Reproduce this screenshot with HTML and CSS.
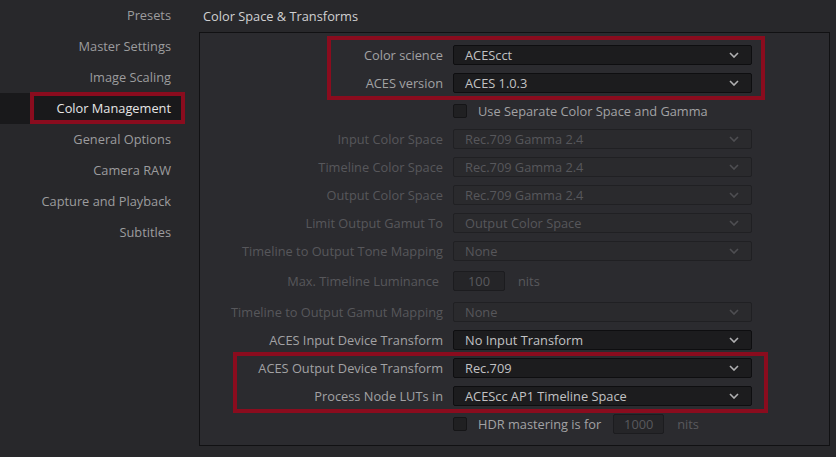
FILE: index.html
```html
<!DOCTYPE html>
<html>
<head>
<meta charset="utf-8">
<link rel="stylesheet" href="styles.css">
</head>
<body>
<div class="app">
  <nav class="sidebar">
    <div class="nav-item">Presets</div>
    <div class="nav-item">Master Settings</div>
    <div class="nav-item">Image Scaling</div>
    <div class="nav-item selected">Color Management</div>
    <div class="nav-item">General Options</div>
    <div class="nav-item">Camera RAW</div>
    <div class="nav-item">Capture and Playback</div>
    <div class="nav-item">Subtitles</div>
  </nav>
  <main class="main">
    <div class="title">Color Space &amp; Transforms</div>
    <section class="panel">
      <div class="form">
        <div class="label">Color science</div>
        <div class="select"><span>ACEScct</span><svg class="chev" viewBox="0 0 10 6"><path d="M1 1 L5 5 L9 1"/></svg></div>

        <div class="label">ACES version</div>
        <div class="select"><span>ACES 1.0.3</span><svg class="chev" viewBox="0 0 10 6"><path d="M1 1 L5 5 L9 1"/></svg></div>

        <div class="label"></div>
        <div class="check-row"><div class="checkbox"></div><span class="check-label">Use Separate Color Space and Gamma</span></div>

        <div class="label dis">Input Color Space</div>
        <div class="select dis"><span>Rec.709 Gamma 2.4</span><svg class="chev" viewBox="0 0 10 6"><path d="M1 1 L5 5 L9 1"/></svg></div>

        <div class="label dis">Timeline Color Space</div>
        <div class="select dis"><span>Rec.709 Gamma 2.4</span><svg class="chev" viewBox="0 0 10 6"><path d="M1 1 L5 5 L9 1"/></svg></div>

        <div class="label dis">Output Color Space</div>
        <div class="select dis"><span>Rec.709 Gamma 2.4</span><svg class="chev" viewBox="0 0 10 6"><path d="M1 1 L5 5 L9 1"/></svg></div>

        <div class="label dis">Limit Output Gamut To</div>
        <div class="select dis"><span>Output Color Space</span><svg class="chev" viewBox="0 0 10 6"><path d="M1 1 L5 5 L9 1"/></svg></div>

        <div class="label dis">Timeline to Output Tone Mapping</div>
        <div class="select dis"><span>None</span><svg class="chev" viewBox="0 0 10 6"><path d="M1 1 L5 5 L9 1"/></svg></div>

        <div class="label dis lum-label">Max. Timeline Luminance</div>
        <div class="num-row lum"><div class="num dis">100</div><span class="unit">nits</span></div>

        <div class="label dis">Timeline to Output Gamut Mapping</div>
        <div class="select dis"><span>None</span><svg class="chev" viewBox="0 0 10 6"><path d="M1 1 L5 5 L9 1"/></svg></div>

        <div class="label">ACES Input Device Transform</div>
        <div class="select"><span>No Input Transform</span><svg class="chev" viewBox="0 0 10 6"><path d="M1 1 L5 5 L9 1"/></svg></div>

        <div class="label">ACES Output Device Transform</div>
        <div class="select"><span>Rec.709</span><svg class="chev" viewBox="0 0 10 6"><path d="M1 1 L5 5 L9 1"/></svg></div>

        <div class="label">Process Node LUTs in</div>
        <div class="select"><span>ACEScc AP1 Timeline Space</span><svg class="chev" viewBox="0 0 10 6"><path d="M1 1 L5 5 L9 1"/></svg></div>

        <div class="label"></div>
        <div class="check-row"><div class="checkbox"></div><span class="check-label">HDR mastering is for</span><div class="num dis wide">1000</div><span class="unit">nits</span></div>
      </div>
      <div class="mark mark-top"></div>
      <div class="mark mark-bottom"></div>
    </section>
  </main>
</div>
</body>
</html>
```

FILE: styles.css
```css
* { box-sizing: border-box; }
html, body {
  margin: 0;
  padding: 0;
  background: #28282b;
  font-family: "Open Sans", "DejaVu Sans", sans-serif;
  font-size: 12.8px;
  color: #a6a6a8;
}
.app {
  display: flex;
  width: 836px;
  height: 457px;
  overflow: hidden;
}
.sidebar {
  width: 185px;
  flex: none;
}
.nav-item {
  position: relative;
  height: 31px;
  line-height: 30px;
  text-align: right;
  padding-right: 14px;
  color: #9c9c9e;
  white-space: nowrap;
}
.nav-item.selected {
  background: #19191b;
  color: #e6e6e6;
}
.nav-item.selected::after {
  content: "";
  position: absolute;
  left: 30px;
  right: 0;
  top: -1px;
  bottom: 0;
  border: 4px solid #8a0c1e;
}
.main {
  margin-left: 14px;
  flex: none;
  width: 631px;
}
.title {
  height: 32px;
  line-height: 32px;
  padding-left: 4px;
  color: #d0d0d2;
}
.panel {
  position: relative;
  width: 631px;
  height: 414px;
  background: #2b2b2f;
  border: 1px solid #111113;
  padding-top: 12px;
}
.form {
  display: grid;
  grid-template-columns: 243px 299px;
  column-gap: 10px;
  row-gap: 8px;
  grid-auto-rows: auto;
  align-items: start;
}
.label {
  height: 20px;
  text-align: right;
  line-height: 20px;
  white-space: nowrap;
  color: #a2a2a4;
}
.label.dis { color: #57575b; }
.select {
  display: flex;
  align-items: center;
  justify-content: space-between;
  height: 20px;
  background: #1c1c1e;
  border: 1px solid #0e0e10;
  border-radius: 2px;
  padding: 0 12px 0 11px;
  color: #c2c2c4;
  white-space: nowrap;
}
.select.dis {
  background: #2a2a2d;
  border-color: #202023;
  color: #57575b;
}
.chev {
  width: 10px;
  height: 6px;
  fill: none;
  stroke: #b0b0b2;
  stroke-width: 1.6;
}
.select.dis .chev { stroke: #4e4e52; }
.check-row {
  display: flex;
  align-items: center;
  height: 20px;
  white-space: nowrap;
}
.checkbox {
  width: 14px;
  height: 14px;
  background: #202022;
  border: 1px solid #151517;
  border-radius: 2px;
  margin-right: 11px;
}
.check-label { color: #a2a2a4; }
.form > .lum-label {
  height: 25px;
  padding-top: 2px;
  padding-right: 4px;
}
.form > .lum {
  height: 25px;
  padding-top: 2px;
  display: flex;
  align-items: flex-start;
}
.num {
  width: 52px;
  height: 20px;
  line-height: 18px;
  text-align: center;
  background: #252528;
  border: 1px solid #1c1c1f;
  border-radius: 2px;
  color: #59595d;
  margin-right: 13px;
}
.num.wide {
  margin-left: 12px;
  width: 51px;
}
.unit { color: #59595d; line-height: 20px; }
.mark {
  position: absolute;
  border: 4px solid #8a0c1e;
  pointer-events: none;
}
.mark-top {
  left: 127px;
  top: 3px;
  width: 438px;
  height: 64px;
}
.mark-bottom {
  left: 33px;
  top: 319px;
  width: 535px;
  height: 61px;
}
```
